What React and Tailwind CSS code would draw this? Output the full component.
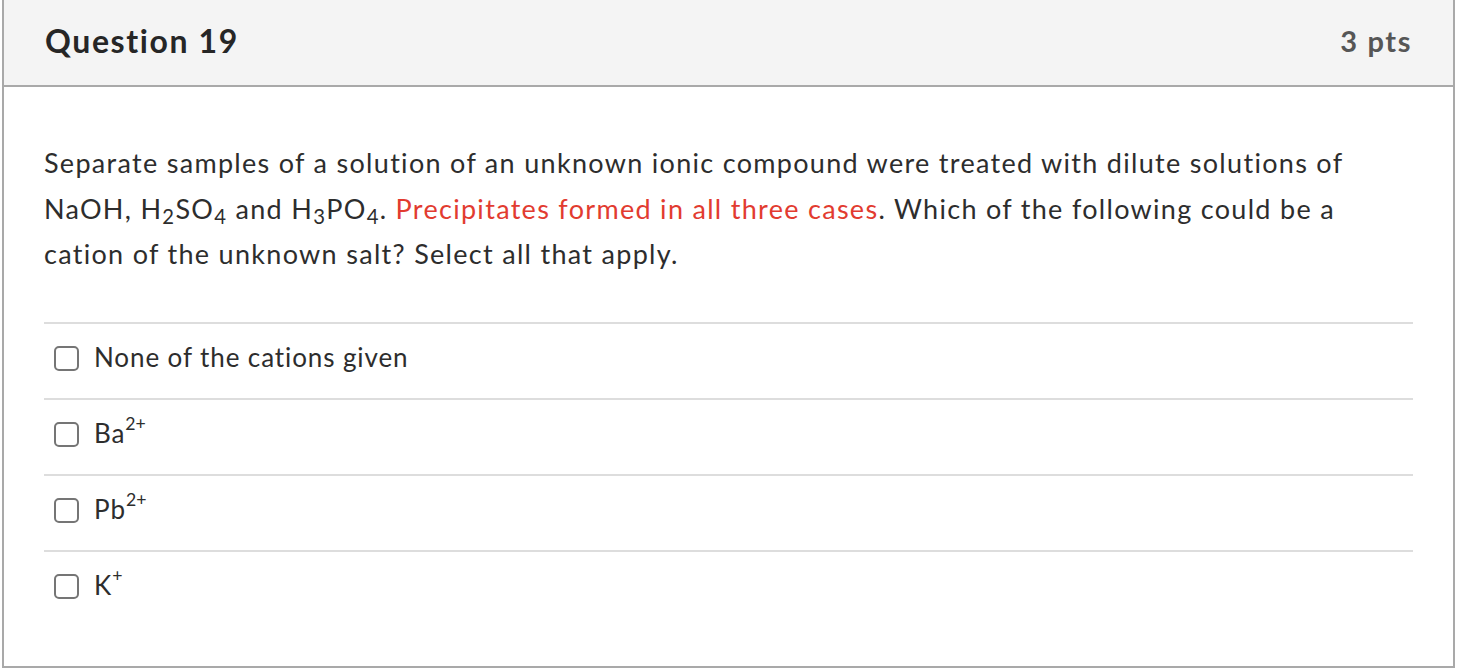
import React from "react";

const Sub = ({ children }) => (
  <sub className="text-[0.75em]">{children}</sub>
);
const Sup = ({ children }) => (
  <sup className="text-[0.68em] tracking-normal top-[-0.75em]">{children}</sup>
);

function Answer({ children }) {
  return (
    <div className="flex items-center h-[76px] border-t-2 border-[#dddddd] pl-[10px] pb-[5px]">
      <span className="w-[25px] h-[25px] border-2 border-[#757575] rounded-[5px] shrink-0" />
      <span className="ml-[15px] text-[#2d2d2d] text-[26px] tracking-[0.9px]">{children}</span>
    </div>
  );
}

export default function App() {
  return (
    <div className="w-[1458px] h-[670px] bg-white" style={{ fontFamily: "Lato, 'Liberation Sans', sans-serif" }}>
      <div className="ml-[2px] w-[1453px] h-[668px] border-x-2 border-b-2 border-[#a9a9a9] flex flex-col">
        <div className="h-[87px] bg-[#f4f4f4] border-b-2 border-[#a9a9a9] flex items-center justify-between pl-[41px] pr-[41px] pb-[4px] shrink-0">
          <div className="text-[32px] font-bold text-[#262626] leading-none tracking-[1.6px]">Question 19</div>
          <div className="text-[29px] font-bold text-[#565656] leading-none tracking-[1.6px]">3 pts</div>
        </div>
        <div className="pl-[40px] pr-[40px] pt-[53px] text-[27px] leading-[45.5px] text-[#2d2d2d] tracking-[1.3px]">
          <p className="whitespace-nowrap">
            Separate samples of a solution of an unknown ionic compound were treated with dilute solutions of
            <br />
            NaOH, H<Sub>2</Sub>SO<Sub>4</Sub> and H<Sub>3</Sub>PO<Sub>4</Sub>.{" "}
            <span className="text-[#e23b30]">Precipitates formed in all three cases</span>. Which of the following could be a
            <br />
            cation of the unknown salt? Select all that apply.
          </p>
          <div className="mt-[45px]">
            <Answer>None of the cations given</Answer>
            <Answer>Ba<Sup>2+</Sup></Answer>
            <Answer>Pb<Sup>2+</Sup></Answer>
            <Answer>K<Sup>+</Sup></Answer>
          </div>
        </div>
      </div>
    </div>
  );
}
